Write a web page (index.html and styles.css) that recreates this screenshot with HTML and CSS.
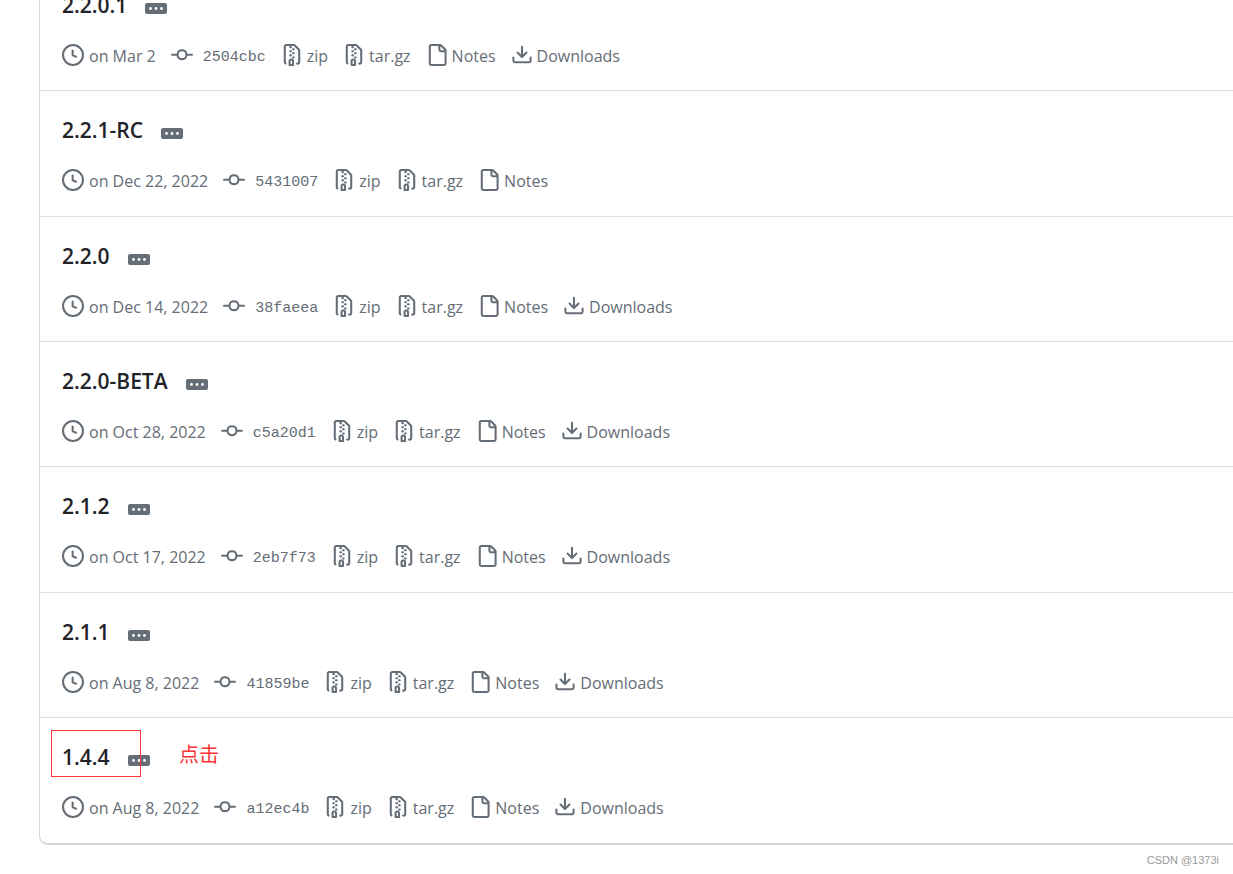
FILE: index.html
```
<!DOCTYPE html>
<html lang="en">
<head>
<meta charset="utf-8">
<title>Tags</title>
<link rel="stylesheet" href="styles.css">
</head>
<body>
<svg class="sprite" aria-hidden="true">
<symbol id="clock" viewBox="0 0 16 16"><path d="M8 0a8 8 0 1 1 0 16A8 8 0 0 1 8 0ZM1.5 8a6.5 6.5 0 1 0 13 0 6.5 6.5 0 0 0-13 0Zm7-3.25v2.992l2.028.812a.75.75 0 0 1-.557 1.392l-2.5-1A.751.751 0 0 1 7 8.25v-3.5a.75.75 0 0 1 1.5 0Z"/></symbol>
<symbol id="commit" viewBox="0 0 16 16"><path d="M11.93 8.5a4.002 4.002 0 0 1-7.86 0H.75a.75.75 0 0 1 0-1.5h3.32a4.002 4.002 0 0 1 7.86 0h3.32a.75.75 0 0 1 0 1.5Zm-1.43-.75a2.5 2.5 0 1 0-5 0 2.5 2.5 0 0 0 5 0Z"/></symbol>
<symbol id="zip" viewBox="0 0 16 16"><path d="M3.5 1.75v11.5c0 .09.048.173.126.217a.75.75 0 0 1-.752 1.298A1.748 1.748 0 0 1 2 13.25V1.75C2 .784 2.784 0 3.75 0h5.586c.464 0 .909.185 1.237.513l2.914 2.914c.329.328.513.773.513 1.237v8.586A1.75 1.75 0 0 1 12.25 15h-.5a.75.75 0 0 1 0-1.5h.5a.25.25 0 0 0 .25-.25V4.664a.25.25 0 0 0-.073-.177L9.513 1.573a.25.25 0 0 0-.177-.073H7.25a.75.75 0 0 1 0 1.5h-.5a.75.75 0 0 1 0-1.5h-3a.25.25 0 0 0-.25.25Zm3.75 8.75h.5c.966 0 1.75.784 1.75 1.75v3a.75.75 0 0 1-.75.75h-2.5a.75.75 0 0 1-.75-.75v-3c0-.966.784-1.75 1.75-1.75ZM6 5.25a.75.75 0 0 1 .75-.75h.5a.75.75 0 0 1 0 1.5h-.5A.75.75 0 0 1 6 5.25Zm.75 2.25h.5a.75.75 0 0 1 0 1.5h-.5a.75.75 0 0 1 0-1.5ZM8 6.75A.75.75 0 0 1 8.75 6h.5a.75.75 0 0 1 0 1.5h-.5A.75.75 0 0 1 8 6.75ZM8.75 3h.5a.75.75 0 0 1 0 1.5h-.5a.75.75 0 0 1 0-1.5ZM8 9.75A.75.75 0 0 1 8.75 9h.5a.75.75 0 0 1 0 1.5h-.5A.75.75 0 0 1 8 9.75Zm-1 2.5v2.25h1v-2.25a.25.25 0 0 0-.25-.25h-.5a.25.25 0 0 0-.25.25Z"/></symbol>
<symbol id="file" viewBox="0 0 16 16"><path d="M2 1.75C2 .784 2.784 0 3.75 0h6.586c.464 0 .909.184 1.237.513l2.914 2.914c.329.328.513.773.513 1.237v9.586A1.75 1.75 0 0 1 13.25 16h-9.5A1.75 1.75 0 0 1 2 14.25Zm1.75-.25a.25.25 0 0 0-.25.25v12.5c0 .138.112.25.25.25h9.5a.25.25 0 0 0 .25-.25V6h-2.75A1.75 1.75 0 0 1 9 4.25V1.5Zm6.75.062V4.25c0 .138.112.25.25.25h2.688l-.011-.013-2.914-2.914-.013-.011Z"/></symbol>
<symbol id="download" viewBox="0 0 16 16"><path d="M2.75 14A1.75 1.75 0 0 1 1 12.25v-2.5a.75.75 0 0 1 1.5 0v2.5c0 .138.112.25.25.25h10.5a.25.25 0 0 0 .25-.25v-2.5a.75.75 0 0 1 1.5 0v2.5A1.75 1.75 0 0 1 13.25 14Z"/><path d="M7.25 7.689V2a.75.75 0 0 1 1.5 0v5.689l1.97-1.969a.749.749 0 1 1 1.06 1.06l-3.25 3.25a.749.749 0 0 1-1.06 0L4.22 6.78a.749.749 0 1 1 1.06-1.06l1.97 1.969Z"/></symbol>
<symbol id="dots" viewBox="0 0 22 11"><rect width="22" height="11" rx="2"/><g fill="#fff"><circle cx="5.5" cy="5.5" r="1.4"/><circle cx="11" cy="5.5" r="1.4"/><circle cx="16.5" cy="5.5" r="1.4"/></g></symbol>
</svg>
<main>
<ul class="tags">
<li class="tag">
<div class="head"><h2><a href="#">2.2.0.1</a></h2><button class="more" aria-label="Toggle commit message"><svg><use href="#dots"/></svg></button></div>
<ul class="meta">
<li class="date"><svg class="icon"><use href="#clock"/></svg>on Mar 2</li>
<li><a class="hash" href="#"><svg class="icon"><use href="#commit"/></svg><code>2504cbc</code></a></li>
<li><a href="#"><svg class="icon"><use href="#zip"/></svg>zip</a></li>
<li><a href="#"><svg class="icon"><use href="#zip"/></svg>tar.gz</a></li>
<li><a href="#"><svg class="icon"><use href="#file"/></svg>Notes</a></li>
<li><a href="#"><svg class="icon"><use href="#download"/></svg>Downloads</a></li>
</ul>
</li>
<li class="tag">
<div class="head"><h2><a href="#">2.2.1-RC</a></h2><button class="more" aria-label="Toggle commit message"><svg><use href="#dots"/></svg></button></div>
<ul class="meta">
<li class="date"><svg class="icon"><use href="#clock"/></svg>on Dec 22, 2022</li>
<li><a class="hash" href="#"><svg class="icon"><use href="#commit"/></svg><code>5431007</code></a></li>
<li><a href="#"><svg class="icon"><use href="#zip"/></svg>zip</a></li>
<li><a href="#"><svg class="icon"><use href="#zip"/></svg>tar.gz</a></li>
<li><a href="#"><svg class="icon"><use href="#file"/></svg>Notes</a></li>
</ul>
</li>
<li class="tag">
<div class="head"><h2><a href="#">2.2.0</a></h2><button class="more" aria-label="Toggle commit message"><svg><use href="#dots"/></svg></button></div>
<ul class="meta">
<li class="date"><svg class="icon"><use href="#clock"/></svg>on Dec 14, 2022</li>
<li><a class="hash" href="#"><svg class="icon"><use href="#commit"/></svg><code>38faeea</code></a></li>
<li><a href="#"><svg class="icon"><use href="#zip"/></svg>zip</a></li>
<li><a href="#"><svg class="icon"><use href="#zip"/></svg>tar.gz</a></li>
<li><a href="#"><svg class="icon"><use href="#file"/></svg>Notes</a></li>
<li><a href="#"><svg class="icon"><use href="#download"/></svg>Downloads</a></li>
</ul>
</li>
<li class="tag">
<div class="head"><h2><a href="#">2.2.0-BETA</a></h2><button class="more" aria-label="Toggle commit message"><svg><use href="#dots"/></svg></button></div>
<ul class="meta">
<li class="date"><svg class="icon"><use href="#clock"/></svg>on Oct 28, 2022</li>
<li><a class="hash" href="#"><svg class="icon"><use href="#commit"/></svg><code>c5a20d1</code></a></li>
<li><a href="#"><svg class="icon"><use href="#zip"/></svg>zip</a></li>
<li><a href="#"><svg class="icon"><use href="#zip"/></svg>tar.gz</a></li>
<li><a href="#"><svg class="icon"><use href="#file"/></svg>Notes</a></li>
<li><a href="#"><svg class="icon"><use href="#download"/></svg>Downloads</a></li>
</ul>
</li>
<li class="tag">
<div class="head"><h2><a href="#">2.1.2</a></h2><button class="more" aria-label="Toggle commit message"><svg><use href="#dots"/></svg></button></div>
<ul class="meta">
<li class="date"><svg class="icon"><use href="#clock"/></svg>on Oct 17, 2022</li>
<li><a class="hash" href="#"><svg class="icon"><use href="#commit"/></svg><code>2eb7f73</code></a></li>
<li><a href="#"><svg class="icon"><use href="#zip"/></svg>zip</a></li>
<li><a href="#"><svg class="icon"><use href="#zip"/></svg>tar.gz</a></li>
<li><a href="#"><svg class="icon"><use href="#file"/></svg>Notes</a></li>
<li><a href="#"><svg class="icon"><use href="#download"/></svg>Downloads</a></li>
</ul>
</li>
<li class="tag">
<div class="head"><h2><a href="#">2.1.1</a></h2><button class="more" aria-label="Toggle commit message"><svg><use href="#dots"/></svg></button></div>
<ul class="meta">
<li class="date"><svg class="icon"><use href="#clock"/></svg>on Aug 8, 2022</li>
<li><a class="hash" href="#"><svg class="icon"><use href="#commit"/></svg><code>41859be</code></a></li>
<li><a href="#"><svg class="icon"><use href="#zip"/></svg>zip</a></li>
<li><a href="#"><svg class="icon"><use href="#zip"/></svg>tar.gz</a></li>
<li><a href="#"><svg class="icon"><use href="#file"/></svg>Notes</a></li>
<li><a href="#"><svg class="icon"><use href="#download"/></svg>Downloads</a></li>
</ul>
</li>
<li class="tag">
<div class="head"><h2><a href="#">1.4.4</a></h2><button class="more" aria-label="Toggle commit message"><svg><use href="#dots"/></svg></button></div>
<ul class="meta">
<li class="date"><svg class="icon"><use href="#clock"/></svg>on Aug 8, 2022</li>
<li><a class="hash" href="#"><svg class="icon"><use href="#commit"/></svg><code>a12ec4b</code></a></li>
<li><a href="#"><svg class="icon"><use href="#zip"/></svg>zip</a></li>
<li><a href="#"><svg class="icon"><use href="#zip"/></svg>tar.gz</a></li>
<li><a href="#"><svg class="icon"><use href="#file"/></svg>Notes</a></li>
<li><a href="#"><svg class="icon"><use href="#download"/></svg>Downloads</a></li>
</ul>
<span class="frame"></span>
<span class="note" lang="zh-CN">点击</span>
</li>
</ul>
</main>
<footer class="credit">CSDN @1373i</footer>
</body>
</html>
```
FILE: styles.css
```
* { box-sizing: border-box; }
body {
  margin: 0;
  background: #fff;
  color: #656d76;
  font: 16px/24px "Open Sans", "Noto Sans", sans-serif;
  overflow: hidden;
}
ul { list-style: none; margin: 0; padding: 0; }
a { color: inherit; text-decoration: none; }
.sprite { position: absolute; width: 0; height: 0; }

.tags {
  margin: -34px 0 0 39px;
  border-left: 1px solid #d0d7de;
  border-bottom: 2px solid #d0d7de;
  border-bottom-left-radius: 9px;
}
.tag {
  position: relative;
  padding: 22px 22px 22px;
  border-bottom: 1px solid #d8dee4;
}
.tag:nth-child(3n+2) { padding-bottom: 23px; }
.tag:last-child { padding-bottom: 23px; border-bottom: 0; }

.head { display: flex; align-items: flex-end; gap: 18px; margin-bottom: 22px; }
h2 {
  margin: 0;
  color: #1f2328;
  font-size: 21px;
  font-weight: 600;
  line-height: 34px;
}
.more {
  display: flex;
  margin: 0 0 8px;
  padding: 0;
  border: 0;
  background: none;
  cursor: pointer;
}
.more svg { width: 22px; height: 11px; fill: #656d76; }

.meta { display: flex; gap: 15px; }
.meta li, .meta a { display: flex; align-items: center; gap: 4px; white-space: nowrap; }
.meta .date { gap: 5px; }
.meta .hash { gap: 10px; }
.icon { flex: none; width: 22px; height: 22px; margin-bottom: 2px; fill: currentColor; }
code { padding-top: 4px; font: 15px/20px "Liberation Mono", monospace; }

.frame {
  position: absolute;
  top: 12px;
  left: 11px;
  width: 90px;
  height: 47px;
  border: 1px solid #ff3333;
}
.note {
  position: absolute;
  top: 23px;
  left: 139px;
  color: #ff3333;
  font: 20px/26px "Noto Sans CJK SC", sans-serif;
}
.credit {
  padding: 7px 14px 0 0;
  color: #999;
  font: 11px/16px "Liberation Sans", sans-serif;
  text-align: right;
}
```
